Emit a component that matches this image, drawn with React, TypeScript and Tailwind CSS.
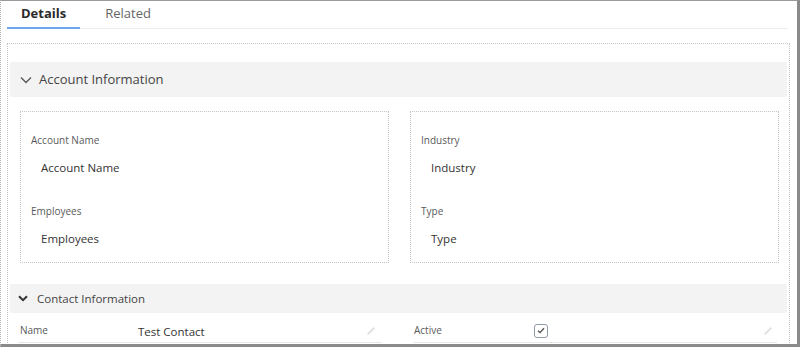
const font = { fontFamily: '"Open Sans", "Noto Sans", sans-serif' };

function ChevronThin() {
  return (
    <svg width="12" height="8" viewBox="0 0 12 8" className="shrink-0">
      <path d="M1 1.5 L6 6.5 L11 1.5" fill="none" stroke="#555" strokeWidth="1.3" />
    </svg>
  );
}

function ChevronBold() {
  return (
    <svg width="10" height="7" viewBox="0 0 10 7" className="shrink-0">
      <path d="M1 1.2 L5 5.2 L9 1.2" fill="none" stroke="#333" strokeWidth="2" />
    </svg>
  );
}

function Pencil() {
  return (
    <svg width="10" height="10" viewBox="0 0 10 10" className="shrink-0">
      <path d="M1 9 L2 6.5 L7.5 1 L9 2.5 L3.5 8 Z" fill="#e2e2e2" />
    </svg>
  );
}

function Field({ label, value }: { label: string; value: string }) {
  return (
    <div className="flex flex-col">
      <div className="h-[14px] pl-[10px] text-[10px] leading-[14px] text-[#5a5a5a]">{label}</div>
      <div className="mt-[13px] h-[16px] pl-[20px] text-[11.5px] leading-[16px] text-[#333]">{value}</div>
    </div>
  );
}

function FieldBox({ a, b }: { a: [string, string]; b: [string, string] }) {
  return (
    <div className="flex h-[152px] w-[369px] flex-col gap-[28px] border border-dotted border-[#c0c5ce] pt-[21px]">
      <Field label={a[0]} value={a[1]} />
      <Field label={b[0]} value={b[1]} />
    </div>
  );
}

export default function App() {
  return (
    <div
      style={font}
      className="relative h-[347px] w-[800px] overflow-hidden border-t border-r-[3px] border-b-[3px] border-l border-t-[#9a9a9a] border-r-[#8a8a8a] border-b-[#8a8a8a] border-l-[#b0b0b0] bg-white [border-left-style:dotted]"
    >
      {/* tabs */}
      <div className="ml-[6px] mr-[9px] flex h-[28px] items-end border-b border-[#ececec]">
        <div className="-mb-px flex h-[28px] items-center border-b-[2px] border-[#6ea7ee] px-[14px] pb-[1px] text-[13px] font-bold text-[#2b2b2b]">
          Details
        </div>
        <div className="ml-[11px] flex h-[28px] items-center px-[14px] text-[13px] text-[#666]">Related</div>
      </div>

      {/* content panel */}
      <div className="ml-[6px] mt-[14px] h-[320px] w-[783px] border border-b-0 border-dotted border-[#c0c5ce] px-[2px] pt-[18px]">
        <div className="flex h-[35px] items-center gap-[7px] rounded-[2px] bg-[#f3f3f3] pl-[10px] text-[13px] text-[#444]">
          <ChevronThin />
          <span>Account Information</span>
        </div>

        <div className="mt-[14px] flex gap-[21px] pl-[10px]">
          <FieldBox a={['Account Name', 'Account Name']} b={['Employees', 'Employees']} />
          <FieldBox a={['Industry', 'Industry']} b={['Type', 'Type']} />
        </div>

        <div className="mt-[21px] flex h-[29px] items-center gap-[9px] rounded-[2px] bg-[#f3f3f3] pl-[8px] text-[11.5px] text-[#444]">
          <ChevronBold />
          <span>Contact Information</span>
        </div>

        <div className="mt-[6px] flex gap-[32px] pl-[8px] pr-[8px]">
          <div className="flex h-[24px] w-[364px] items-center border-b border-[#e6e6e6] pl-[2px] pr-[6px]">
            <span className="w-[118px] text-[10px] text-[#5a5a5a]">Name</span>
            <span className="flex-1 pt-[3px] text-[11.5px] text-[#333]">Test Contact</span>
            <Pencil />
          </div>
          <div className="flex h-[24px] w-[363px] items-center border-b border-[#e6e6e6] pr-[4px]">
            <span className="w-[120px] text-[10px] text-[#5a5a5a]">Active</span>
            <span className="flex h-[14px] w-[14px] items-center justify-center rounded-[3px] border border-[#8f9aa8]">
              <svg width="8" height="7" viewBox="0 0 8 7">
                <path d="M1 3.8 L3 5.6 L7 1.2" fill="none" stroke="#555" strokeWidth="1.4" />
              </svg>
            </span>
            <span className="flex-1" />
            <Pencil />
          </div>
        </div>
      </div>
    </div>
  );
}
